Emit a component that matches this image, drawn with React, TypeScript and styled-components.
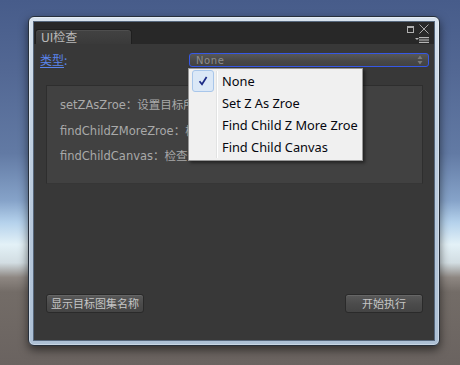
import React from "react";
import styled, { createGlobalStyle } from "styled-components";

const Global = createGlobalStyle`
  html, body { margin: 0; padding: 0; }
  body {
    width: 460px;
    height: 365px;
    overflow: hidden;
    background: linear-gradient(180deg,
      #475c8a 0%, #536894 20%, #627aa4 42%, #86a3c9 55%,
      #b5d2ec 61%, #e3f1f7 67%, #d2dde2 72%, #8e8782 76%, #736c67 80%, #6a6360 100%);
    font-family: "DejaVu Sans", "Noto Sans CJK SC", sans-serif;
  }
`;

const Frame = styled.div`
  margin: 16px 0 0 28px;
  width: 402px;
  height: 320px;
  padding: 4px;
  border: 1px solid #27303c;
  border-radius: 6px;
  background: linear-gradient(180deg, #d8e3ee 0%, #bfcfe1 40%, #adc0d5 100%);
  box-shadow: 0 4px 10px rgba(0, 0, 0, 0.55), inset 0 0 0 1px rgba(255,255,255,0.35);
`;

const Inner = styled.div`
  width: 400px;
  height: 318px;
  border: 1px solid #56677c;
  background: #383838;
  display: flex;
  flex-direction: column;
`;

const TitleBar = styled.div`
  height: 22px;
  flex: none;
  background: #282828;
  display: flex;
  align-items: flex-end;
  position: relative;
`;

const Tab = styled.div`
  margin-left: 1px;
  width: 97px;
  height: 15px;
  background: linear-gradient(180deg, #424242, #3a3a3a);
  border: 1px solid #1f1f1f;
  border-bottom: none;
  border-top-left-radius: 4px;
  border-top-right-radius: 4px;
  box-shadow: inset 0 1px 0 #4e4e4e;
  color: #b8b8b8;
  font-size: 12px;
  line-height: 16px;
  padding-left: 5px;
  box-sizing: border-box;
  font-family: "DejaVu Sans", "Noto Sans CJK SC", sans-serif;
`;

const WinButtons = styled.div`
  position: absolute;
  right: 5px;
  top: 2px;
  display: flex;
  flex-direction: column;
  align-items: flex-end;
  gap: 3px;
`;

const WinRow = styled.div`
  display: flex;
  align-items: center;
  gap: 5px;
`;

const Content = styled.div`
  flex: 1;
  display: flex;
  flex-direction: column;
  position: relative;
`;

const FieldRow = styled.div`
  display: grid;
  grid-template-columns: 149px 1fr;
  padding: 9px 5px 0 6px;
  align-items: center;
`;

const Label = styled.div`
  color: #5a84ea;
  font-size: 12px;
  line-height: 14px;
  font-family: "Noto Sans CJK SC", sans-serif;
`;

const Under = styled.span`
  text-decoration: underline;
  text-underline-offset: 2px;
`;

const Popup = styled.div`
  height: 14px;
  box-sizing: border-box;
  border: 1px solid #3658e6;
  border-radius: 3px;
  background: linear-gradient(180deg, #585858, #474747 60%, #424242);
  display: flex;
  align-items: center;
  justify-content: space-between;
  padding: 0 5px 0 6px;
  color: #8e8e8e;
  font-size: 10px;
  letter-spacing: 0.6px;
  font-family: "DejaVu Sans", sans-serif;
`;

const HelpBox = styled.div`
  margin: 18px 11px 0 12px;
  height: 99px;
  box-sizing: border-box;
  background: #414141;
  border: 1px solid #2e2e2e;
  border-bottom-color: #363636;
  padding: 7px 14px 0 13px;
`;

const HelpLine = styled.div`
  height: 25.5px;
  line-height: 25.5px;
  color: #a9a9a9;
  font-size: 11.5px;
  white-space: nowrap;
  font-family: "DejaVu Sans", "Noto Sans CJK SC", sans-serif;
`;

const ButtonRow = styled.div`
  margin-top: auto;
  display: flex;
  justify-content: space-between;
  padding: 0 11px 27px 12px;
`;

const Button = styled.div<{ $w: number }>`
  width: ${(p) => p.$w}px;
  height: 19px;
  box-sizing: border-box;
  border: 1px solid #2a2a2a;
  border-radius: 3px;
  background: linear-gradient(180deg, #595959, #4b4b4b 55%, #444444);
  box-shadow: inset 0 1px 0 #666;
  color: #c6c6c6;
  font-size: 11px;
  line-height: 17px;
  text-align: center;
  font-family: "Noto Sans CJK SC", sans-serif;
`;

const Menu = styled.div`
  position: absolute;
  left: 154px;
  top: 24px;
  width: 175px;
  height: 93px;
  box-sizing: border-box;
  background: #f0f0f0;
  border: 1px solid #979797;
  box-shadow: 2px 2px 3px rgba(0, 0, 0, 0.45);
  padding: 1px 2px 2px 2px;
  &::before {
    content: "";
    position: absolute;
    left: 27px;
    top: 2px;
    bottom: 2px;
    width: 1px;
    background: #e2e3e3;
    border-right: 1px solid #ffffff;
  }
`;

const Item = styled.div`
  display: grid;
  grid-template-columns: 27px 1fr;
  height: 22px;
  align-items: center;
  font-family: "Noto Sans", "Open Sans", sans-serif;
  font-size: 12.8px;
  color: #05070f;
`;

const CheckBox = styled.div`
  width: 20px;
  height: 20px;
  margin-left: 1px;
  border: 1px solid #a8c6ea;
  border-radius: 3px;
  background: #dbe8f7;
  display: flex;
  align-items: center;
  justify-content: center;
`;

const ItemText = styled.div`
  padding-left: 4px;
  white-space: nowrap;
`;

const items = ["None", "Set Z As Zroe", "Find Child Z More Zroe", "Find Child Canvas"];

export default function App() {
  return (
    <>
      <Global />
      <Frame>
        <Inner>
          <TitleBar>
            <Tab>UI检查</Tab>
            <WinButtons>
              <WinRow>
                <svg width="7" height="7" viewBox="0 0 7 7">
                  <rect x="0.5" y="0.5" width="6" height="6" fill="none" stroke="#b0b0b0" strokeWidth="1" />
                  <rect x="0" y="0" width="7" height="2" fill="#b0b0b0" />
                </svg>
                <svg width="10" height="10" viewBox="0 0 10 10">
                  <path d="M0.5 0.5 L9.5 9.5 M9.5 0.5 L0.5 9.5" stroke="#a8a8a8" strokeWidth="1" />
                </svg>
              </WinRow>
              <svg width="14" height="6" viewBox="0 0 14 6">
                <path d="M0 1 L4 1 L2 3 Z" fill="#b4b4b4" />
                <rect x="4" y="0" width="10" height="1.2" fill="#b4b4b4" />
                <rect x="4" y="2.4" width="10" height="1.2" fill="#b4b4b4" />
                <rect x="4" y="4.8" width="10" height="1.2" fill="#b4b4b4" />
              </svg>
            </WinButtons>
          </TitleBar>
          <Content>
            <FieldRow>
              <Label>
                <Under>类型</Under>:
              </Label>
              <Popup>
                <span>None</span>
                <svg width="6" height="10" viewBox="0 0 6 10">
                  <path d="M3 0.5 L5.5 4 L0.5 4 Z" fill="#7a7a7a" />
                  <path d="M3 9.5 L5.5 6 L0.5 6 Z" fill="#7a7a7a" />
                </svg>
              </Popup>
            </FieldRow>
            <HelpBox>
              <HelpLine>setZAsZroe：设置目标所有子物体的Z为0</HelpLine>
              <HelpLine>findChildZMoreZroe：检查Z大于0的子物体</HelpLine>
              <HelpLine>findChildCanvas：检查目标下所有的Canvas 并输出路径</HelpLine>
            </HelpBox>
            <ButtonRow>
              <Button $w={98}>显示目标图集名称</Button>
              <Button $w={78}>开始执行</Button>
            </ButtonRow>
            <Menu>
              {items.map((t, i) => (
                <Item key={t}>
                  {i === 0 ? (
                    <CheckBox>
                      <svg width="10" height="10" viewBox="0 0 10 10">
                        <path d="M1.5 5.2 L4 8.3 L8.6 1" fill="none" stroke="#1b2a86" strokeWidth="1.7" />
                      </svg>
                    </CheckBox>
                  ) : (
                    <span />
                  )}
                  <ItemText>{t}</ItemText>
                </Item>
              ))}
            </Menu>
          </Content>
        </Inner>
      </Frame>
    </>
  );
}
